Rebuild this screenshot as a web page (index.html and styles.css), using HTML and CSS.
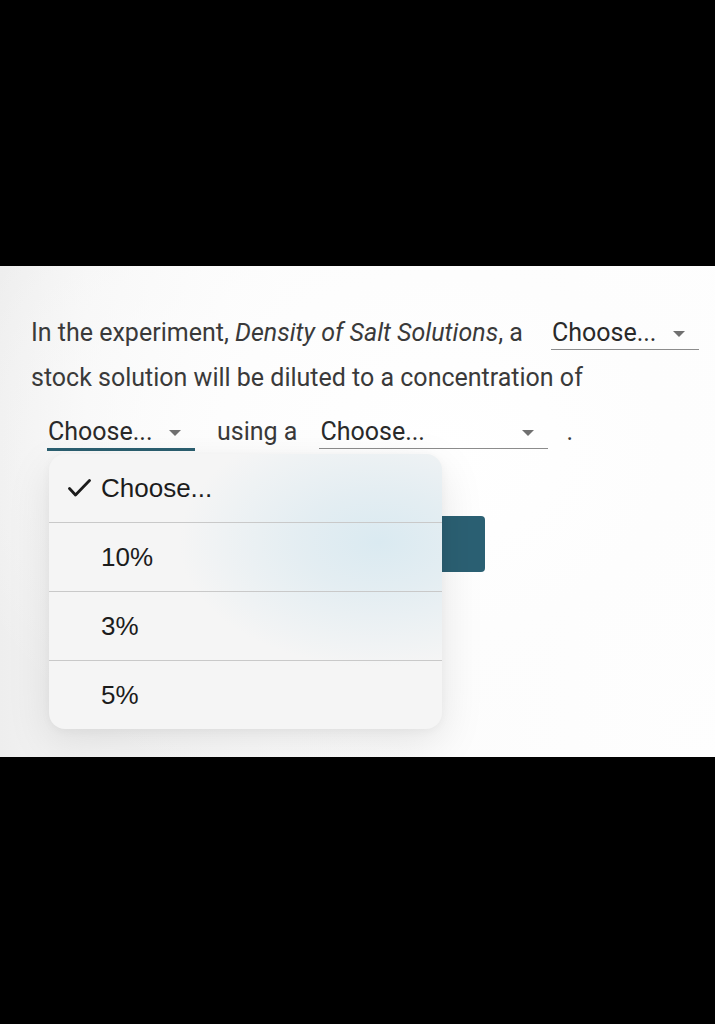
FILE: index.html
```html
<!DOCTYPE html>
<html lang="en">
<head>
<meta charset="utf-8">
<title>Density of Salt Solutions</title>
<link rel="stylesheet" href="styles.css">
</head>
<body>
<div class="screen">
  <div class="bar-top"></div>
  <main class="panel">
    <div class="row row-1">
      <span>In the experiment, <em>Density of Salt Solutions</em>, a</span>
      <div class="select w148 lead"><span>Choose...</span><i class="caret"></i></div>
    </div>
    <div class="row row-2">
      <span>stock solution will be diluted to a concentration of</span>
    </div>
    <div class="row row-3">
      <div class="select w148 focused first">
        <span>Choose...</span><i class="caret"></i>
        <ul class="menu">
          <li class="opt checked"><span class="tick"><svg width="23" height="18" viewBox="0 0 23 18"><path d="M1.5 9.5 L7.5 16 L21.5 1.5" fill="none" stroke="#1c1c1c" stroke-width="2.8" stroke-linecap="round" stroke-linejoin="round"/></svg></span>Choose...</li>
          <li class="opt"><span class="tick"></span>10%</li>
          <li class="opt"><span class="tick"></span>3%</li>
          <li class="opt"><span class="tick"></span>5%</li>
        </ul>
      </div>
      <span>using a</span>
      <div class="select w229 last"><span>Choose...</span><i class="caret"></i></div>
      <span class="dot">.</span>
    </div>
    <div class="actions">
      <button class="btn" type="button"></button>
    </div>
  </main>
  <div class="bar-bottom"></div>
</div>
</body>
</html>
```

FILE: styles.css
```css
html, body {
  margin: 0;
  padding: 0;
  background: #000;
}
.screen {
  width: 715px;
  height: 1024px;
  display: flex;
  flex-direction: column;
}
.bar-top {
  height: 266px;
  background: #000;
}
.bar-bottom {
  flex: 1;
  background: #000;
}
.panel {
  position: relative;
  height: 491px;
  box-sizing: border-box;
  padding: 52px 0 0 31px;
  background:
    radial-gradient(ellipse 70% 80% at 62% 38%, #ffffff 0%, #fdfdfd 45%, rgba(250,250,250,0) 100%),
    linear-gradient(90deg, #eeeeee 0%, #f5f5f5 12%, #fbfbfb 40%, #fefefe 100%);
  font-family: Roboto, "Liberation Sans", sans-serif;
  font-size: 25px;
  line-height: 30px;
  color: #3a3a3a;
  overflow: hidden;
}
.row {
  display: flex;
  align-items: baseline;
  white-space: nowrap;
}
.row-1 { margin-bottom: 13px; }
.row-2 { margin-bottom: 24px; }
em { font-style: italic; }
.select {
  position: relative;
  display: flex;
  align-items: baseline;
  justify-content: space-between;
  box-sizing: border-box;
  padding: 0 14px 1px 1px;
  margin: 0 16px 0 22px;
  border-bottom: 1px solid #8c8c8c;
  color: #2a2a2a;
}
.select.lead { margin-left: 28px; }
.select.first { margin-left: 16px; margin-right: 22px; }
.select.last { margin-right: 16px; }
.w148 { width: 148px; }
.w229 { width: 229px; }
.select.focused {
  border-bottom: 3px solid #2b5f70;
}
.caret {
  align-self: center;
  width: 0;
  height: 0;
  border-left: 6px solid transparent;
  border-right: 6px solid transparent;
  border-top: 6px solid #707070;
  margin-top: 1px;
}
.dot { margin-left: 2px; }
.menu {
  position: absolute;
  left: 2px;
  top: calc(100% + 6px);
  z-index: 2;
  width: 393px;
  margin: 0;
  padding: 0;
  list-style: none;
  border-radius: 16px;
  background:
    radial-gradient(ellipse 200px 125px at 330px 88px, rgba(218, 234, 241, 1) 0%, rgba(222, 235, 241, 0.75) 40%, rgba(245, 245, 245, 0) 100%),
    #f5f5f5;
  box-shadow: 0 14px 44px rgba(0, 0, 0, 0.10), 0 2px 10px rgba(0, 0, 0, 0.04);
  font-family: "Liberation Sans", Arial, sans-serif;
  font-size: 26px;
  color: #1c1c1c;
  overflow: hidden;
}
.opt {
  display: flex;
  align-items: center;
  height: 68px;
  padding-left: 19px;
  border-top: 1px solid #c9c9c9;
}
.opt:first-child {
  border-top: none;
}
.tick {
  display: inline-flex;
  align-items: center;
  width: 33px;
  height: 20px;
}
.actions {
  margin-top: 65px;
  padding-left: 209px;
}
.btn {
  display: block;
  width: 245px;
  height: 56px;
  border: none;
  border-radius: 4px;
  background: #2b6073;
  padding: 0;
}
```
